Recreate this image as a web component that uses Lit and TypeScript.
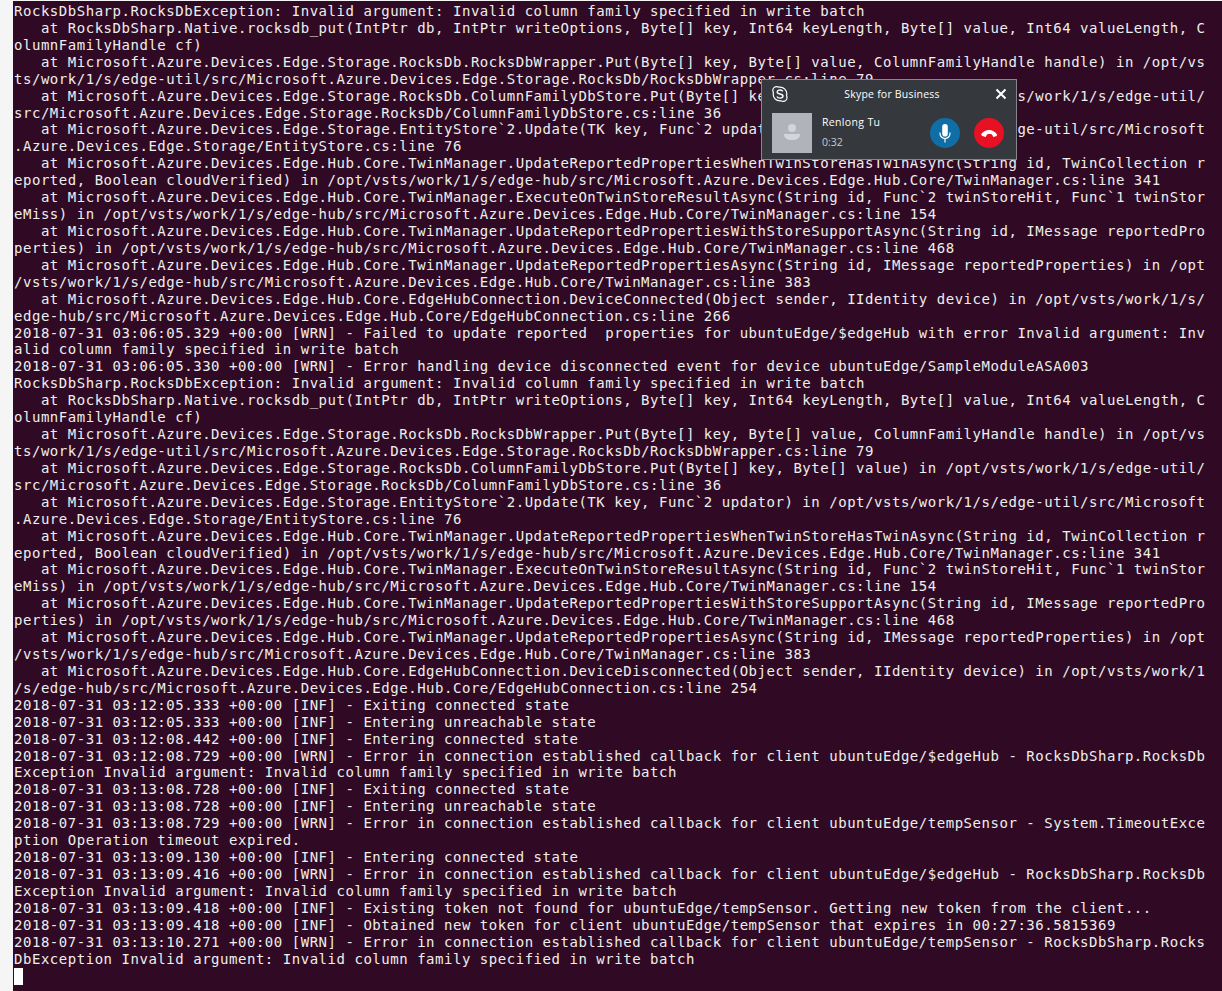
import { LitElement, html, css } from "lit";
import { customElement } from "lit/decorators.js";

const LOG = `RocksDbSharp.RocksDbException: Invalid argument: Invalid column family specified in write batch
   at RocksDbSharp.Native.rocksdb_put(IntPtr db, IntPtr writeOptions, Byte[] key, Int64 keyLength, Byte[] value, Int64 valueLength, C
olumnFamilyHandle cf)
   at Microsoft.Azure.Devices.Edge.Storage.RocksDb.RocksDbWrapper.Put(Byte[] key, Byte[] value, ColumnFamilyHandle handle) in /opt/vs
ts/work/1/s/edge-util/src/Microsoft.Azure.Devices.Edge.Storage.RocksDb/RocksDbWrapper.cs:line 79
   at Microsoft.Azure.Devices.Edge.Storage.RocksDb.ColumnFamilyDbStore.Put(Byte[] key, Byte[] value) in /opt/vsts/work/1/s/edge-util/
src/Microsoft.Azure.Devices.Edge.Storage.RocksDb/ColumnFamilyDbStore.cs:line 36
   at Microsoft.Azure.Devices.Edge.Storage.EntityStore\`2.Update(TK key, Func\`2 updator) in /opt/vsts/work/1/s/edge-util/src/Microsoft
.Azure.Devices.Edge.Storage/EntityStore.cs:line 76
   at Microsoft.Azure.Devices.Edge.Hub.Core.TwinManager.UpdateReportedPropertiesWhenTwinStoreHasTwinAsync(String id, TwinCollection r
eported, Boolean cloudVerified) in /opt/vsts/work/1/s/edge-hub/src/Microsoft.Azure.Devices.Edge.Hub.Core/TwinManager.cs:line 341
   at Microsoft.Azure.Devices.Edge.Hub.Core.TwinManager.ExecuteOnTwinStoreResultAsync(String id, Func\`2 twinStoreHit, Func\`1 twinStor
eMiss) in /opt/vsts/work/1/s/edge-hub/src/Microsoft.Azure.Devices.Edge.Hub.Core/TwinManager.cs:line 154
   at Microsoft.Azure.Devices.Edge.Hub.Core.TwinManager.UpdateReportedPropertiesWithStoreSupportAsync(String id, IMessage reportedPro
perties) in /opt/vsts/work/1/s/edge-hub/src/Microsoft.Azure.Devices.Edge.Hub.Core/TwinManager.cs:line 468
   at Microsoft.Azure.Devices.Edge.Hub.Core.TwinManager.UpdateReportedPropertiesAsync(String id, IMessage reportedProperties) in /opt
/vsts/work/1/s/edge-hub/src/Microsoft.Azure.Devices.Edge.Hub.Core/TwinManager.cs:line 383
   at Microsoft.Azure.Devices.Edge.Hub.Core.EdgeHubConnection.DeviceConnected(Object sender, IIdentity device) in /opt/vsts/work/1/s/
edge-hub/src/Microsoft.Azure.Devices.Edge.Hub.Core/EdgeHubConnection.cs:line 266
2018-07-31 03:06:05.329 +00:00 [WRN] - Failed to update reported  properties for ubuntuEdge/$edgeHub with error Invalid argument: Inv
alid column family specified in write batch
2018-07-31 03:06:05.330 +00:00 [WRN] - Error handling device disconnected event for device ubuntuEdge/SampleModuleASA003
RocksDbSharp.RocksDbException: Invalid argument: Invalid column family specified in write batch
   at RocksDbSharp.Native.rocksdb_put(IntPtr db, IntPtr writeOptions, Byte[] key, Int64 keyLength, Byte[] value, Int64 valueLength, C
olumnFamilyHandle cf)
   at Microsoft.Azure.Devices.Edge.Storage.RocksDb.RocksDbWrapper.Put(Byte[] key, Byte[] value, ColumnFamilyHandle handle) in /opt/vs
ts/work/1/s/edge-util/src/Microsoft.Azure.Devices.Edge.Storage.RocksDb/RocksDbWrapper.cs:line 79
   at Microsoft.Azure.Devices.Edge.Storage.RocksDb.ColumnFamilyDbStore.Put(Byte[] key, Byte[] value) in /opt/vsts/work/1/s/edge-util/
src/Microsoft.Azure.Devices.Edge.Storage.RocksDb/ColumnFamilyDbStore.cs:line 36
   at Microsoft.Azure.Devices.Edge.Storage.EntityStore\`2.Update(TK key, Func\`2 updator) in /opt/vsts/work/1/s/edge-util/src/Microsoft
.Azure.Devices.Edge.Storage/EntityStore.cs:line 76
   at Microsoft.Azure.Devices.Edge.Hub.Core.TwinManager.UpdateReportedPropertiesWhenTwinStoreHasTwinAsync(String id, TwinCollection r
eported, Boolean cloudVerified) in /opt/vsts/work/1/s/edge-hub/src/Microsoft.Azure.Devices.Edge.Hub.Core/TwinManager.cs:line 341
   at Microsoft.Azure.Devices.Edge.Hub.Core.TwinManager.ExecuteOnTwinStoreResultAsync(String id, Func\`2 twinStoreHit, Func\`1 twinStor
eMiss) in /opt/vsts/work/1/s/edge-hub/src/Microsoft.Azure.Devices.Edge.Hub.Core/TwinManager.cs:line 154
   at Microsoft.Azure.Devices.Edge.Hub.Core.TwinManager.UpdateReportedPropertiesWithStoreSupportAsync(String id, IMessage reportedPro
perties) in /opt/vsts/work/1/s/edge-hub/src/Microsoft.Azure.Devices.Edge.Hub.Core/TwinManager.cs:line 468
   at Microsoft.Azure.Devices.Edge.Hub.Core.TwinManager.UpdateReportedPropertiesAsync(String id, IMessage reportedProperties) in /opt
/vsts/work/1/s/edge-hub/src/Microsoft.Azure.Devices.Edge.Hub.Core/TwinManager.cs:line 383
   at Microsoft.Azure.Devices.Edge.Hub.Core.EdgeHubConnection.DeviceDisconnected(Object sender, IIdentity device) in /opt/vsts/work/1
/s/edge-hub/src/Microsoft.Azure.Devices.Edge.Hub.Core/EdgeHubConnection.cs:line 254
2018-07-31 03:12:05.333 +00:00 [INF] - Exiting connected state
2018-07-31 03:12:05.333 +00:00 [INF] - Entering unreachable state
2018-07-31 03:12:08.442 +00:00 [INF] - Entering connected state
2018-07-31 03:12:08.729 +00:00 [WRN] - Error in connection established callback for client ubuntuEdge/$edgeHub - RocksDbSharp.RocksDb
Exception Invalid argument: Invalid column family specified in write batch
2018-07-31 03:13:08.728 +00:00 [INF] - Exiting connected state
2018-07-31 03:13:08.728 +00:00 [INF] - Entering unreachable state
2018-07-31 03:13:08.729 +00:00 [WRN] - Error in connection established callback for client ubuntuEdge/tempSensor - System.TimeoutExce
ption Operation timeout expired.
2018-07-31 03:13:09.130 +00:00 [INF] - Entering connected state
2018-07-31 03:13:09.416 +00:00 [WRN] - Error in connection established callback for client ubuntuEdge/$edgeHub - RocksDbSharp.RocksDb
Exception Invalid argument: Invalid column family specified in write batch
2018-07-31 03:13:09.418 +00:00 [INF] - Existing token not found for ubuntuEdge/tempSensor. Getting new token from the client...
2018-07-31 03:13:09.418 +00:00 [INF] - Obtained new token for client ubuntuEdge/tempSensor that expires in 00:27:36.5815369
2018-07-31 03:13:10.271 +00:00 [WRN] - Error in connection established callback for client ubuntuEdge/tempSensor - RocksDbSharp.Rocks
DbException Invalid argument: Invalid column family specified in write batch`.split("\n");

@customElement("app-root")
export class AppRoot extends LitElement {
  static styles = css`
    :host { display: block; width: 1222px; height: 991px; background: #f5f5f5; overflow: hidden; position: relative; }
    .term { margin-left: 13px; height: 990px; margin-top: 1px; background: #300a24; padding: 2px 0 0 1px; box-sizing: border-box;
      font-family: "DejaVu Sans Mono", monospace; font-size: 14px; letter-spacing: 0.53px; color: #eeeeec; }
    .line { white-space: pre; height: 16.93px; line-height: 16.93px; }
    .cursor { width: 9px; height: 17px; background: #fff; }
    .toast { position: absolute; left: 761px; top: 79px; width: 256px; height: 81px; box-sizing: border-box; border: 1px solid #85878a;
      background: #35383d; color: #fff; font-family: "Open Sans", sans-serif; display: flex; flex-direction: column; }
    .head { height: 27px; display: flex; align-items: center; padding: 0 9px; }
    .title { flex: 1; text-align: center; font-size: 10.5px; line-height: 14px; letter-spacing: .2px; }
    .body { display: flex; align-items: center; padding: 6px 0 0 10px; }
    .avatar { width: 40px; height: 40px; background: #b1b3ba; display: flex; align-items: center; justify-content: center; }
    .who { margin-left: 10px; width: 108px; padding-bottom: 2px; box-sizing: border-box; }
    .name { font-size: 10.5px; line-height: 14px; letter-spacing: .35px; }
    .time { font-size: 10.5px; line-height: 14px; color: #c9cacc; margin-top: 6px; }
    .btn { width: 30px; height: 30px; border-radius: 50%; display: flex; align-items: center; justify-content: center; }
    .mic { background: #0f6ea6; margin-right: 14px; }
    .end { background: #e81123; }
    svg { display: block; }
  `;

  render() {
    return html`
      <div class="term">
        ${LOG.map((l) => html`<div class="line">${l}</div>`)}
        <div class="cursor"></div>
      </div>
      <div class="toast">
        <div class="head">
          <svg width="18" height="18" viewBox="0 0 18 18" fill="none" stroke="#fff" stroke-width="1.2">
            <path d="M9 2.2c3.8 0 6.8 3 6.8 6.6 0 .7-.1 1.3-.3 1.9.3.6.5 1.200.5 1.900 0 2.200-1.800 3.800-3.900 3.800-.8 0-1.500-.2-2.100-.6-.3.1-.7.1-1 .1-3.800 0-6.800-3-6.800-6.600 0-.6.100-1.200.2-1.700C2.100 7 1.800 6.300 1.800 5.500 1.800 3.300 3.600 1.600 5.800 1.600c.8 0 1.500.2 2.100.6.400 0 .7 0 1.100 0z"/>
            <path d="M11.800 6.300C11.200 5.400 10.200 5 9 5 7.400 5 6.200 5.800 6.200 7c0 2.700 5.800 1.400 5.800 4.100 0 1.200-1.300 2-3 2-1.400 0-2.500-.6-3.100-1.600" stroke-width="1.400"/>
          </svg>
          <div class="title">Skype for Business</div>
          <svg width="12" height="12" viewBox="0 0 12 12" stroke="#fff" stroke-width="2"><path d="M1.500 1.500l9 9M10.500 1.500l-9 9"/></svg>
        </div>
        <div class="body">
          <div class="avatar">
            <svg width="18" height="20" viewBox="0 0 18 20" fill="#d4d5da">
              <circle cx="9" cy="5" r="4"/>
              <path d="M1 11h16c0 4-3 6-8 6s-8-2-8-6z"/>
            </svg>
          </div>
          <div class="who">
            <div class="name">Renlong Tu</div>
            <div class="time">0:32</div>
          </div>
          <div class="btn mic">
            <svg width="14" height="20" viewBox="0 0 14 20" fill="none" stroke="#fff" stroke-width="1.200">
              <rect x="4.200" y="1" width="5.600" height="12.500" rx="2.800" fill="#fff" stroke="none"/>
              <path d="M2 9.500v1a5 5 0 0 0 10 0v-1M7 15.500v4"/>
            </svg>
          </div>
          <div class="btn end">
            <svg width="18" height="10" viewBox="0 0 18 10" fill="#fff">
              <path d="M1 6.500C3 3.500 5.800 2 9 2s6 1.500 8 4.500l-.3 1.600-3.400 1-1.300-2.700c-1-.6-4-.6-5 0L5.700 9.100l-3.400-1z"/>
            </svg>
          </div>
        </div>
      </div>
    `;
  }
}
